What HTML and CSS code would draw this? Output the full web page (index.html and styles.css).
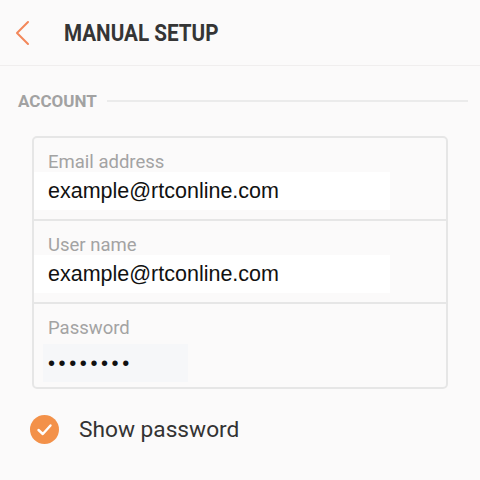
FILE: index.html
```html
<!DOCTYPE html>
<html>
<head>
<meta charset="utf-8">
<link rel="stylesheet" href="styles.css">
</head>
<body>
<div class="screen">
  <header class="topbar">
    <svg class="back" width="16" height="26" viewBox="0 0 16 26"><path d="M14 2 L3 13 L14 24" fill="none" stroke="#f3875a" stroke-width="2" stroke-linecap="round" stroke-linejoin="round"/></svg>
    <h1 class="title">MANUAL SETUP</h1>
  </header>
  <div class="section">
    <span class="section-title">ACCOUNT</span>
    <span class="section-line"></span>
  </div>
  <div class="card">
    <div class="field">
      <div class="label">Email address</div>
      <div class="value">example@rtconline.com</div>
    </div>
    <div class="field">
      <div class="label">User name</div>
      <div class="value">example@rtconline.com</div>
    </div>
    <div class="field">
      <div class="label">Password</div>
      <div class="value pass">••••••••</div>
    </div>
  </div>
  <div class="check-row">
    <span class="check">
      <svg width="29" height="29" viewBox="0 0 29 29"><circle cx="14.5" cy="14.5" r="14.5" fill="#f39149"/><path d="M8.5 15 L12.8 19 L20.5 10.5" fill="none" stroke="#fff" stroke-width="2.4" stroke-linecap="round" stroke-linejoin="round"/></svg>
    </span>
    <span class="check-label">Show password</span>
  </div>
</div>
</body>
</html>
```

FILE: styles.css
```css
html, body {
  margin: 0;
  padding: 0;
  background: #fbfafa;
}
.screen {
  width: 480px;
  height: 480px;
  overflow: hidden;
  font-family: Roboto, "Liberation Sans", sans-serif;
}
.topbar {
  height: 66px;
  display: flex;
  align-items: center;
  border-bottom: 1px solid #f0eeee;
  box-sizing: border-box;
  padding: 0 0 0 14px;
}
.back {
  display: block;
  margin-top: 1px;
}
.title {
  margin: 0 0 0 34px;
  font-size: 24px;
  font-weight: 700;
  color: #353535;
  transform: scaleX(0.86);
  transform-origin: left center;
  white-space: nowrap;
}
.section {
  display: flex;
  align-items: center;
  padding: 24px 12px 0 18px;
  height: 22px;
}
.section-title {
  font-size: 17px;
  font-weight: 700;
  color: #a2a2a2;
}
.section-line {
  flex: 1;
  height: 2px;
  background: #ebebeb;
  margin-left: 10px;
}
.card {
  margin: 24px 32px 0 32px;
  border: 2px solid #e6e6e6;
  border-radius: 5px;
  background: #fbfafa;
}
.field {
  height: 83px;
  box-sizing: border-box;
  border-bottom: 2px solid #e6e6e6;
  padding-top: 13.5px;
}
.field:last-child {
  border-bottom: none;
}
.label {
  font-size: 18.5px;
  color: #a3a3a3;
  padding-left: 14px;
  line-height: 20px;
}
.value {
  margin-top: 0;
  width: 356px;
  padding: 6.5px 0 6px 14px;
  box-sizing: border-box;
  background: #ffffff;
  font-family: "Liberation Sans", Arial, sans-serif;
  font-size: 21.5px;
  line-height: 26px;
  color: #111;
}
.value.pass {
  margin-top: 6px;
  margin-left: 9px;
  width: 145px;
  padding: 6px 0 6px 5px;
  background: #f6f7f9;
  font-size: 20px;
  letter-spacing: 3.6px;
}
.check-row {
  display: flex;
  align-items: center;
  padding: 26px 0 0 30px;
}
.check svg {
  display: block;
}
.check-label {
  margin-left: 20px;
  font-size: 22.7px;
  color: #333;
}
```
